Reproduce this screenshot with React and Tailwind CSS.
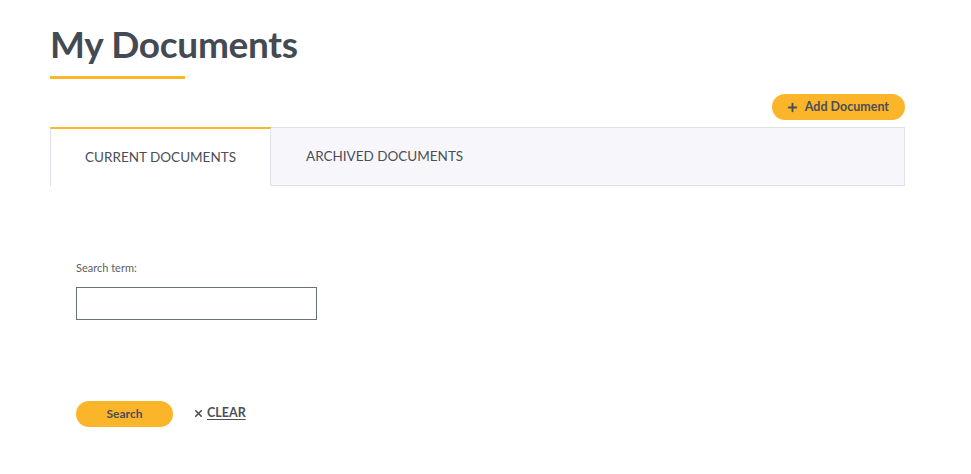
import { Plus, X } from "lucide-react";

export default function App() {
  return (
    <div
      className="min-h-screen bg-white pl-[50px] pr-[66px] pt-[22px] text-[#4a4e57]"
      style={{ fontFamily: "Lato, 'Open Sans', sans-serif" }}
    >
      <h1 className="text-[37px] font-bold leading-[44px] tracking-[-0.3px] text-[#444a53]">
        My Documents
      </h1>
      <div className="mt-[10px] h-[3px] w-[135px] bg-[#fbb52b]" />

      <div className="mt-[15px] flex justify-end">
        <button className="flex h-[26px] items-center gap-[6px] rounded-full bg-[#fbb52b] pl-[14px] pr-[16px] text-[12.5px] font-bold text-[#4a4e57]">
          <Plus size={13} strokeWidth={3.5} />
          Add Document
        </button>
      </div>

      <div className="mt-[7px] flex h-[59px] border-r border-t border-[#dfe1e6]">
        <div className="-mt-px flex w-[221px] items-center justify-center border-l border-r border-t-2 border-[#dfe1e6] border-t-[#fbb52b] bg-white text-[13.5px] text-[#4a4e57]">
          CURRENT DOCUMENTS
        </div>
        <div className="flex flex-1 items-center border-b border-[#dfe1e6] bg-[#f7f7fb] pl-[35px] text-[13.5px] text-[#4a4e57]">
          ARCHIVED DOCUMENTS
        </div>
      </div>

      <div className="px-[26px] pt-[74px]">
        <label className="block text-[11px] text-[#5a5e66]">Search term:</label>
        <input
          type="text"
          className="mt-[10px] h-[33px] w-[241px] border border-[#6b717a] outline-none"
        />

        <div className="mt-[81px] flex items-center gap-[20px]">
          <button className="h-[26px] w-[97px] rounded-full bg-[#fbb52b] text-[12px] font-bold text-[#4a4e57]">
            Search
          </button>
          <button className="flex items-center gap-[3px] text-[12.5px] font-bold text-[#4a4e57]">
            <X size={11} strokeWidth={3.5} />
            <span className="underline underline-offset-2">CLEAR</span>
          </button>
        </div>
      </div>
    </div>
  );
}
